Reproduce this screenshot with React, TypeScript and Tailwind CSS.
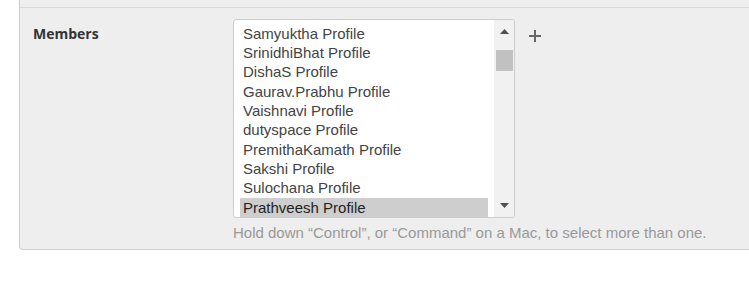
import React from "react";

const items = [
  "Samyuktha Profile",
  "SrinidhiBhat Profile",
  "DishaS Profile",
  "Gaurav.Prabhu Profile",
  "Vaishnavi Profile",
  "dutyspace Profile",
  "PremithaKamath Profile",
  "Sakshi Profile",
  "Sulochana Profile",
  "Prathveesh Profile",
];

export default function App() {
  return (
    <div className="w-full h-[298px] bg-white overflow-hidden">
      <div className="ml-[19px] w-[740px] bg-[#eeeeee] border-l border-b border-[#cfcfcf] rounded-bl-[4px]">
        <div className="h-[8px] border-b border-[#d9d9d9]" />
        <div className="flex pl-[13px] pt-[11px] pb-[6px]">
          <div
            className="w-[200px] shrink-0 mt-[5px] text-[14px] leading-[20px] font-bold text-[#333333]"
            style={{ fontFamily: '"Open Sans", sans-serif' }}
          >
            Members
          </div>
          <div className="flex flex-col">
            <div className="flex items-start">
              <div className="w-[282px] h-[199px] bg-white border border-[#cccccc] rounded-[3px] flex overflow-hidden">
                <div className="flex-1 pl-[6px] pr-[6px] pt-[3.7px]">
                  {items.map((it, i) => (
                    <div
                      key={it}
                      className={`h-[19.33px] leading-[19.33px] pl-[3px] text-[15px] whitespace-nowrap ${
                        i === items.length - 1 ? "bg-[#cecece] text-[#222222]" : "text-[#444444]"
                      }`}
                      style={{ fontFamily: '"Liberation Sans", Arial, sans-serif' }}
                    >
                      {it}
                    </div>
                  ))}
                </div>
                <div className="w-[20px] bg-[#f1f1f1] flex flex-col pt-[3px] pb-[3px]">
                  <div className="h-[17px] flex items-center justify-center">
                    <svg width="9" height="5" viewBox="0 0 9 5">
                      <polygon points="0,5 9,5 4.5,0" fill="#505050" />
                    </svg>
                  </div>
                  <div className="mt-[10px] ml-[2px] w-[17px] h-[21px] bg-[#c1c1c1]" />
                  <div className="flex-1" />
                  <div className="h-[17px] flex items-center justify-center">
                    <svg width="9" height="5" viewBox="0 0 9 5">
                      <polygon points="0,0 9,0 4.5,5" fill="#505050" />
                    </svg>
                  </div>
                </div>
              </div>
              <div className="ml-[14px] mt-[11px]">
                <svg width="12" height="12" viewBox="0 0 12 12">
                  <rect x="5" y="0" width="2" height="12" fill="#666666" />
                  <rect x="0" y="5" width="12" height="2" fill="#666666" />
                </svg>
              </div>
            </div>
            <div
              className="mt-[5px] text-[15px] leading-[20px] text-[#999999] whitespace-nowrap"
              style={{ fontFamily: '"Liberation Sans", Arial, sans-serif' }}
            >
              Hold down “Control”, or “Command” on a Mac, to select more than one.
            </div>
          </div>
        </div>
      </div>
    </div>
  );
}
